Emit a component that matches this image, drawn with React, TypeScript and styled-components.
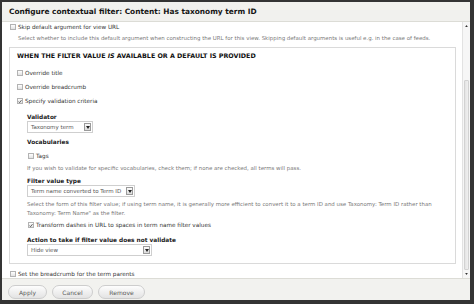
import React from 'react';
import styled, { createGlobalStyle } from 'styled-components';

const GlobalStyle = createGlobalStyle`
  html, body {
    margin: 0;
    padding: 0;
    background: #343434;
  }
  body {
    font-family: "DejaVu Sans", Verdana, sans-serif;
  }
`;

const Frame = styled.div`
  width: 474px;
  height: 304px;
  box-sizing: border-box;
  padding: 2px 4px 4px 2px;
  background: #343434;
  display: flex;
`;

const Dialog = styled.div`
  flex: 1;
  display: flex;
  flex-direction: column;
  background: #fff;
  overflow: hidden;
`;

const TitleBar = styled.div`
  height: 20px;
  flex-shrink: 0;
  box-sizing: border-box;
  display: flex;
  align-items: center;
  padding-left: 7px;
  background: #f1f1ee;
  border-bottom: 1px solid #dcdcd6;
  font-size: 7.4px;
  font-weight: bold;
  color: #151515;
  white-space: nowrap;
`;

const Body = styled.div`
  height: 256px;
  flex-shrink: 0;
  display: flex;
`;

const Content = styled.div`
  flex: 1;
  padding: 0 6px 0 7px;
  overflow: hidden;
`;

const Scrollbar = styled.div`
  width: 8px;
  display: flex;
  flex-direction: column;
  background: #f6f6f6;
  border-left: 1px solid #e2e2e2;
  box-sizing: border-box;
`;

const ScrollArrow = styled.div`
  height: 8px;
  display: flex;
  align-items: center;
  justify-content: center;
  flex-shrink: 0;
`;

const ScrollTrack = styled.div`
  flex: 1;
  display: flex;
  flex-direction: column;
  padding-top: 50px;
`;

const ScrollThumb = styled.div`
  flex: 1;
  margin: 0 1px;
  background: linear-gradient(to right, #e4e4e4, #f0f0f0);
  border: 1px solid #d2d2d2;
  border-radius: 1px;
`;

const CheckRow = styled.div<{ $indent?: number; $top?: number }>`
  display: flex;
  align-items: center;
  gap: 2px;
  height: 10px;
  margin-left: ${(p) => p.$indent ?? 0}px;
  margin-top: ${(p) => p.$top ?? 0}px;
  font-size: 5.7px;
  color: #333;
  white-space: nowrap;
`;

const Box = styled.span`
  width: 6px;
  height: 6px;
  box-sizing: border-box;
  border: 1px solid #b3b3b3;
  background: linear-gradient(#ffffff, #e2e2e2);
  display: inline-flex;
  align-items: center;
  justify-content: center;
  flex-shrink: 0;
`;

const Description = styled.div<{ $indent?: number; $top?: number }>`
  font-size: 5.45px;
  line-height: 9px;
  color: #7a7a7a;
  white-space: nowrap;
  margin-left: ${(p) => p.$indent ?? 0}px;
  margin-top: ${(p) => p.$top ?? 0}px;
`;

const Fieldset = styled.div`
  margin-top: 4px;
  border: 1px solid #dadada;
  padding: 3px 7px 7px 7px;
`;

const Legend = styled.div`
  font-size: 6.35px;
  line-height: 10px;
  font-weight: bold;
  color: #111;
  text-transform: uppercase;
  white-space: nowrap;
`;

const SubSection = styled.div`
  margin-left: 10px;
`;

const FieldLabel = styled.div<{ $top?: number }>`
  font-size: 5.8px;
  line-height: 8px;
  font-weight: bold;
  color: #1a1a1a;
  white-space: nowrap;
  margin-top: ${(p) => p.$top ?? 0}px;
`;

const Select = styled.div<{ $width: number }>`
  width: ${(p) => p.$width}px;
  height: 12px;
  box-sizing: border-box;
  border: 1px solid #cfcfcf;
  background: #fff;
  display: flex;
  align-items: center;
  justify-content: space-between;
  padding: 0 1px 0 3px;
  font-size: 5.5px;
  color: #555;
  white-space: nowrap;
`;

const SelectArrow = styled.span`
  width: 7px;
  height: 8px;
  box-sizing: border-box;
  border: 1px solid #9a9a9a;
  background: linear-gradient(#fafafa, #dcdcdc);
  display: inline-flex;
  align-items: center;
  justify-content: center;
`;

const ButtonPane = styled.div`
  flex: 1;
  display: flex;
  align-items: flex-start;
  gap: 5px;
  padding: 6px 0 0 6px;
  background: #f2f2ef;
  border-top: 1px solid #dcdcd6;
`;

const Button = styled.button<{ $width: number }>`
  width: ${(p) => p.$width}px;
  height: 14px;
  padding: 0;
  border: 1px solid #cdcdcd;
  border-radius: 8px;
  background: linear-gradient(#fdfdfd, #e3e3e3);
  font-family: "DejaVu Sans", Verdana, sans-serif;
  font-size: 6px;
  color: #5a5a5a;
`;

const Check = () => (
  <svg width="5" height="5" viewBox="0 0 10 10">
    <path d="M1.5 5.2 L4 7.8 L8.8 1.6" fill="none" stroke="#333" strokeWidth="1.8" />
  </svg>
);

const Checkbox: React.FC<{ checked?: boolean; label: string; indent?: number; top?: number }> = ({
  checked,
  label,
  indent,
  top,
}) => (
  <CheckRow $indent={indent} $top={top}>
    <Box>{checked && <Check />}</Box>
    {label}
  </CheckRow>
);

const Dropdown: React.FC<{ value: string; width: number }> = ({ value, width }) => (
  <Select $width={width}>
    {value}
    <SelectArrow>
      <svg width="4" height="3" viewBox="0 0 4 3">
        <path d="M0 0 H4 L2 3 Z" fill="#222" />
      </svg>
    </SelectArrow>
  </Select>
);

export default function App() {
  return (
    <Frame>
      <GlobalStyle />
      <Dialog>
        <TitleBar>Configure contextual filter: Content: Has taxonomy term ID</TitleBar>
        <Body>
          <Content>
            <Checkbox label="Skip default argument for view URL" indent={1} />
            <Description $indent={9} $top={2}>
              Select whether to include this default argument when constructing the URL for this view. Skipping
              default arguments is useful e.g. in the case of feeds.
            </Description>
            <Fieldset>
              <Legend>
                When the filter value <i>is</i> available or a default is provided
              </Legend>
              <Checkbox label="Override title" top={7} />
              <Checkbox label="Override breadcrumb" top={4} />
              <Checkbox checked label="Specify validation criteria" top={4} />
              <SubSection>
                <FieldLabel $top={7}>Validator</FieldLabel>
                <Dropdown value="Taxonomy term" width={66} />
                <FieldLabel $top={5}>Vocabularies</FieldLabel>
                <Checkbox label="Tags" indent={1} top={5} />
                <Description $top={3}>
                  If you wish to validate for specific vocabularies, check them; if none are checked, all terms will
                  pass.
                </Description>
                <FieldLabel $top={4}>Filter value type</FieldLabel>
                <Dropdown value="Term name converted to Term ID" width={108} />
                <Description $top={3}>
                  Select the form of this filter value; if using term name, it is generally more efficient to convert
                  it to a term ID and use Taxonomy: Term ID rather than
                  <br />
                  Taxonomy: Term Name" as the filter.
                </Description>
                <Checkbox checked label="Transform dashes in URL to spaces in term name filter values" indent={1} top={2} />
                <FieldLabel $top={6}>Action to take if filter value does not validate</FieldLabel>
                <Dropdown value="Hide view" width={125} />
              </SubSection>
            </Fieldset>
            <Checkbox label="Set the breadcrumb for the term parents" indent={1} top={5} />
          </Content>
          <Scrollbar>
            <ScrollArrow>
              <svg width="3" height="2" viewBox="0 0 4 3">
                <path d="M0 3 H4 L2 0 Z" fill="#333" />
              </svg>
            </ScrollArrow>
            <ScrollTrack>
              <ScrollThumb />
            </ScrollTrack>
            <ScrollArrow>
              <svg width="3" height="2" viewBox="0 0 4 3">
                <path d="M0 0 H4 L2 3 Z" fill="#333" />
              </svg>
            </ScrollArrow>
          </Scrollbar>
        </Body>
        <ButtonPane>
          <Button $width={39}>Apply</Button>
          <Button $width={41}>Cancel</Button>
          <Button $width={47}>Remove</Button>
        </ButtonPane>
      </Dialog>
    </Frame>
  );
}
